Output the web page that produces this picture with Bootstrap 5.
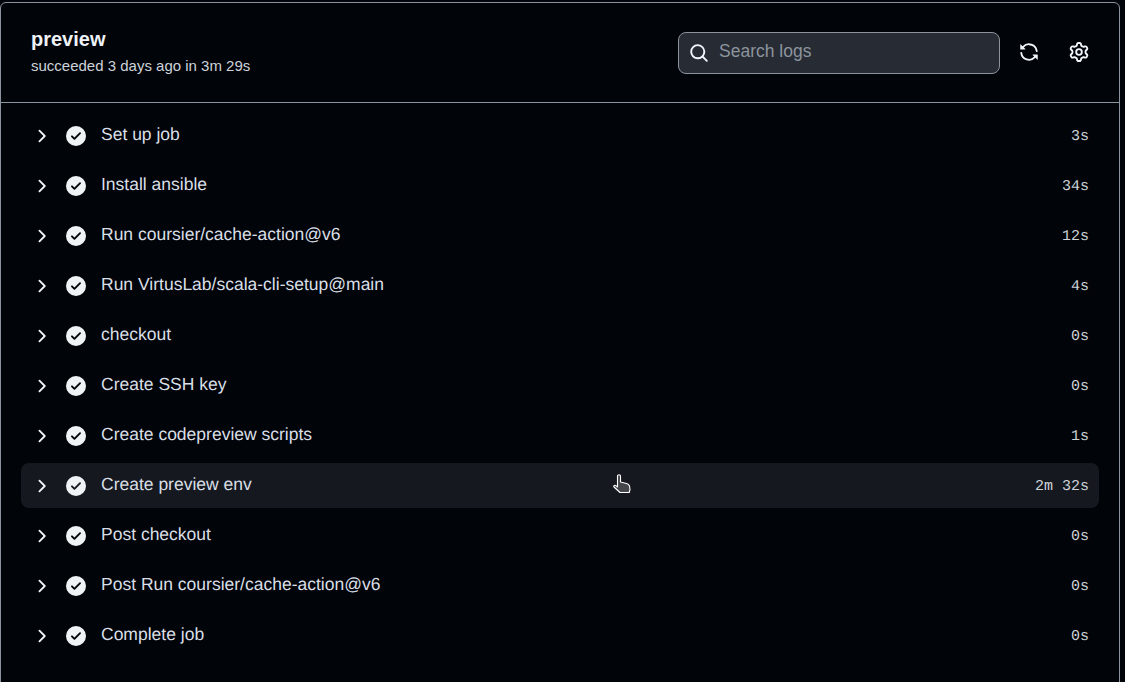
<!DOCTYPE html>
<html lang="en">
<head>
<meta charset="utf-8">
<title>preview</title>
<link rel="stylesheet" href="https://cdn.jsdelivr.net/npm/bootstrap@5.3.0/dist/css/bootstrap.min.css">
<style>
html, body { height: 100%; overflow: hidden; }
body { background: #010409; color: #e6edf3; font-family: "Liberation Sans", Arial, sans-serif; padding-top: 2px; }
.job-frame { width: 1120px; height: 700px; border: 1px solid #8b949e; border-radius: 6px 6px 0 0; }
.job-head { height: 100px; padding: 0 30px; border-bottom: 1px solid #8b949e; }
.job-title { font-size: 20px; font-weight: 700; line-height: 26px; color: #eef2f6; margin-top: -2px; }
.job-sub { font-size: 15px; line-height: 22px; color: #cdd3da; margin-top: 3px; }
.job-search { width: 322px; height: 42px; background: #272b33; border: 1px solid #8b949e; border-radius: 8px; padding: 0 12px 0 10px; margin-right: 19px; gap: 10px; }
.job-search input { background: transparent; border: 0; outline: 0; padding: 0; width: 100%; height: 36px; margin-bottom: 2px; font-size: 17.5px; color: #e6edf3; font-family: inherit; }
.job-search input::placeholder { color: #8b949e; opacity: 1; }
.ico { fill: currentColor; flex: none; display: block; }
.ico-white { color: #f0f6fc; }
.tool-gap { gap: 30px; margin-bottom: 2px; }
.step-list { padding: 10px 20px 0; position: relative; }
.step-row { height: 45px; margin-bottom: 5px; padding: 0 10px; border-radius: 8px; font-size: 17.5px; color: #d9dfe6; text-rendering: geometricPrecision; }
.step-active { background: #15191f; }
.step-chev { margin-right: 15px; margin-top: 1px; }
.step-check { margin-right: 15px; color: #f0f3f6; margin-top: 1px; }
.step-name { line-height: 42px; height: 45px; }
.step-time { font-family: "Liberation Mono", "Courier New", monospace; font-size: 15px; color: #cfd3d8; margin-top: 3px; }
.hand-cursor { position: absolute; left: 612px; top: 471px; }
.frame-host { position: relative; }
</style>
</head>
<body>
<div class="job-frame frame-host">
  <div class="job-head d-flex align-items-center justify-content-between">
    <div>
      <div class="job-title">preview</div>
      <div class="job-sub">succeeded 3 days ago in 3m 29s</div>
    </div>
    <div class="d-flex align-items-center">
      <div class="job-search d-flex align-items-center">
        <svg class="ico ico-white" width="20" height="20" viewBox="0 0 16 16"><path d="M10.68 11.74a6 6 0 0 1-7.922-8.982 6 6 0 0 1 8.982 7.922l3.04 3.04a.749.749 0 0 1-.326 1.275.749.749 0 0 1-.734-.215ZM11.5 7a4.499 4.499 0 1 0-8.997 0A4.499 4.499 0 0 0 11.5 7Z"/></svg>
        <input type="text" placeholder="Search logs">
      </div>
      <div class="d-flex align-items-center tool-gap">
        <svg class="ico ico-white" width="20" height="20" viewBox="0 0 16 16"><path d="M1.705 8.005a.75.75 0 0 1 .834.656 5.5 5.5 0 0 0 9.592 2.97l-1.204-1.204a.25.25 0 0 1 .177-.427h3.646a.25.25 0 0 1 .25.25v3.646a.25.25 0 0 1-.427.177l-1.38-1.38A7.002 7.002 0 0 1 1.05 8.84a.75.75 0 0 1 .656-.834ZM8 2.5a5.487 5.487 0 0 0-4.131 1.869l1.204 1.204A.25.25 0 0 1 4.896 6H1.25A.25.25 0 0 1 1 5.75V2.104a.25.25 0 0 1 .427-.177l1.38 1.38A7.002 7.002 0 0 1 14.95 7.16a.75.75 0 0 1-1.49.178A5.5 5.5 0 0 0 8 2.5Z"/></svg>
        <svg class="ico ico-white" width="20" height="20" viewBox="0 0 16 16"><path d="M8 0a8.2 8.2 0 0 1 .701.031C9.444.095 9.99.645 10.16 1.29l.288 1.107c.018.066.079.158.212.224.231.114.454.243.668.386.123.082.233.09.299.071l1.103-.303c.644-.176 1.392.021 1.82.63.27.385.506.792.704 1.218.315.675.111 1.422-.364 1.891l-.814.806c-.049.048-.098.147-.088.294.016.257.016.515 0 .772-.01.147.038.246.088.294l.814.806c.475.469.679 1.216.364 1.891a7.977 7.977 0 0 1-.704 1.217c-.428.61-1.176.807-1.82.63l-1.102-.302c-.067-.019-.177-.011-.3.071a5.909 5.909 0 0 1-.668.386c-.133.066-.194.158-.211.224l-.29 1.106c-.168.646-.715 1.196-1.458 1.26a8.006 8.006 0 0 1-1.402 0c-.743-.064-1.289-.614-1.458-1.26l-.289-1.106c-.018-.066-.079-.158-.212-.224a5.738 5.738 0 0 1-.668-.386c-.123-.082-.233-.09-.299-.071l-1.103.303c-.644.176-1.392-.021-1.82-.63a8.12 8.12 0 0 1-.704-1.218c-.315-.675-.111-1.422.363-1.891l.815-.806c.05-.048.098-.147.088-.294a6.214 6.214 0 0 1 0-.772c.01-.147-.038-.246-.088-.294l-.815-.806C.635 6.045.431 5.298.746 4.623a7.92 7.92 0 0 1 .704-1.217c.428-.61 1.176-.807 1.82-.63l1.102.302c.067.019.177.011.3-.071.214-.143.437-.272.668-.386.133-.066.194-.158.211-.224l.29-1.106C6.009.645 6.556.095 7.299.03 7.53.01 7.764 0 8 0Zm-.571 1.525c-.036.003-.108.036-.137.146l-.289 1.105c-.147.561-.549.967-.998 1.189-.173.086-.34.183-.5.29-.417.278-.97.423-1.529.27l-1.103-.303c-.109-.03-.175.016-.195.045-.22.312-.412.644-.573.99-.014.031-.021.11.059.19l.815.806c.411.406.562.957.53 1.456a4.709 4.709 0 0 0 0 .582c.032.499-.119 1.05-.53 1.456l-.815.806c-.081.08-.073.159-.059.19.162.346.353.677.573.989.02.03.085.076.195.046l1.102-.303c.56-.153 1.113-.008 1.53.27.161.107.328.204.501.29.447.222.85.629.997 1.189l.289 1.105c.029.109.101.143.137.146a6.6 6.6 0 0 0 1.142 0c.036-.003.108-.036.137-.146l.289-1.105c.147-.561.549-.967.998-1.189.173-.086.34-.183.5-.29.417-.278.97-.423 1.529-.27l1.103.303c.109.029.175-.016.195-.045.22-.313.411-.644.573-.99.014-.031.021-.11-.059-.19l-.815-.806c-.411-.406-.562-.957-.53-1.456a4.709 4.709 0 0 0 0-.582c-.032-.499.119-1.05.53-1.456l.815-.806c.081-.08.073-.159.059-.19a6.464 6.464 0 0 0-.573-.989c-.02-.03-.085-.076-.195-.046l-1.102.303c-.56.153-1.113.008-1.53-.27a4.44 4.44 0 0 0-.501-.29c-.447-.222-.85-.629-.997-1.189l-.289-1.105c-.029-.11-.101-.143-.137-.146a6.6 6.6 0 0 0-1.142 0ZM11 8a3 3 0 1 1-6 0 3 3 0 0 1 6 0ZM9.5 8a1.5 1.5 0 1 0-3.001.001A1.5 1.5 0 0 0 9.5 8Z"/></svg>
      </div>
    </div>
  </div>
  <div class="step-list" id="steps"></div>
  <svg class="hand-cursor" width="18" height="20" viewBox="0 0 18 20"><path d="M4.5 2c0-1.6 3-1.6 3 0v6l6 1.5c1.5.4 2.5 1 3 2.5l.5 3.5-.8 3H7L1 13c-.8-.9.5-2.2 1.5-1.6L4.5 13Z" fill="#44464b" stroke="#fff" stroke-width="1.1" stroke-linejoin="round"/></svg>
</div>
<script>
var chev='M6.22 3.22a.75.75 0 0 1 1.06 0l4.25 4.25a.75.75 0 0 1 0 1.06l-4.25 4.25a.751.751 0 0 1-1.042-.018.751.751 0 0 1-.018-1.042L9.94 8 6.22 4.28a.75.75 0 0 1 0-1.06Z';
var chk='M8 16A8 8 0 1 1 8 0a8 8 0 0 1 0 16Zm3.78-9.72a.751.751 0 0 0-.018-1.042.751.751 0 0 0-1.042-.018L6.75 9.19 5.28 7.72a.751.751 0 0 0-1.042.018.751.751 0 0 0-.018 1.042l2 2a.75.75 0 0 0 1.06 0Z';
var data=[['Set up job','3s'],['Install ansible','34s'],['Run coursier/cache-action@v6','12s'],['Run VirtusLab/scala-cli-setup@main','4s'],['checkout','0s'],['Create SSH key','0s'],['Create codepreview scripts','1s'],['Create preview env','2m 32s'],['Post checkout','0s'],['Post Run coursier/cache-action@v6','0s'],['Complete job','0s']];
document.getElementById('steps').innerHTML=data.map(function(d,i){
 return '<div class="step-row d-flex align-items-center'+(i==7?' step-active':'')+'">'+
 '<svg class="ico ico-white step-chev" width="20" height="20" viewBox="0 0 16 16"><path d="'+chev+'"/></svg>'+
 '<svg class="ico step-check" width="20" height="20" viewBox="0 0 16 16"><path d="'+chk+'"/></svg>'+
 '<span class="step-name flex-grow-1">'+d[0]+'</span><span class="step-time">'+d[1]+'</span></div>';
}).join('');
</script>
<script src="https://cdn.jsdelivr.net/npm/bootstrap@5.3.0/dist/js/bootstrap.bundle.min.js"></script>
</body>
</html>
